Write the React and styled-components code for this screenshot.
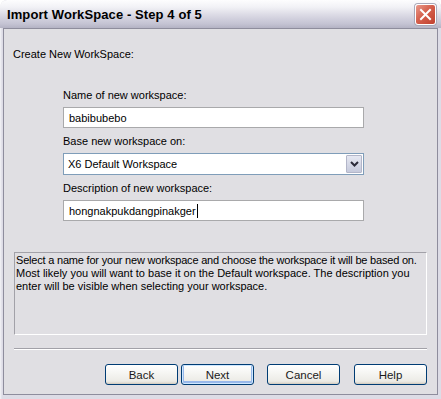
import React from "react";
import styled, { createGlobalStyle } from "styled-components";

const GlobalStyle = createGlobalStyle`
  html, body {
    margin: 0;
    padding: 0;
    background: #ffffff;
  }
  * {
    box-sizing: border-box;
  }
`;

const Frame = styled.div`
  width: 441px;
  height: 399px;
  display: flex;
  flex-direction: column;
  background: linear-gradient(to right, #f4f4f7, #dddce6 2px, #dddce6);
  border-radius: 7px 7px 0 0;
  font-family: "Liberation Sans", Arial, sans-serif;
  overflow: hidden;
`;

const TitleBar = styled.div`
  height: 28px;
  flex: none;
  display: flex;
  align-items: center;
  justify-content: space-between;
  padding: 1px 5px 0 7px;
  background: linear-gradient(
    to bottom,
    #fdfdfe 0%,
    #f2f2f6 25%,
    #dad9e4 55%,
    #c4c3d3 85%,
    #b4b3c4 100%
  );
  border-radius: 7px 7px 0 0;
`;

const Title = styled.span`
  font-size: 13px;
  font-weight: bold;
  color: #000;
  letter-spacing: 0.1px;
`;

const CloseButton = styled.div`
  width: 21px;
  height: 21px;
  border-radius: 3px;
  border: 1px solid #ffffff;
  box-shadow: 0 0 0 1px #a9a8b8;
  background: linear-gradient(135deg, #e99a8b 0%, #d5604d 45%, #c1402f 100%);
  display: flex;
  align-items: center;
  justify-content: center;
`;

const Body = styled.div`
  flex: 1;
  margin: 0 3px 4px 3px;
  background: #e0dfe3;
  border: 1px solid #8e8d9d;
  display: flex;
  flex-direction: column;
  font-size: 11px;
  color: #000;
`;

const Heading = styled.div`
  margin: 18px 0 0 9px;
  line-height: 14px;
`;

const Form = styled.div`
  margin: 27px 0 0 59px;
  width: 301px;
  display: flex;
  flex-direction: column;
`;

const Label = styled.div`
  line-height: 14px;
  margin: ${({ $first }) => ($first ? "0" : "6px")} 0 5px 0;
`;

const TextBox = styled.div`
  height: 21px;
  background: #fff;
  border: 1px solid #a9a9ab;
  padding: 0 0 0 5px;
  display: flex;
  align-items: center;
  line-height: 14px;
`;

const Caret = styled.span`
  display: inline-block;
  width: 1px;
  height: 14px;
  background: #000;
  margin-left: 1px;
`;

const SelectBox = styled.div`
  height: 22px;
  background: #fff;
  border: 1px solid #7f9db9;
  display: flex;
  align-items: stretch;
  line-height: 14px;
`;

const SelectValue = styled.div`
  flex: 1;
  display: flex;
  align-items: center;
  padding-left: 4px;
`;

const SelectArrow = styled.div`
  width: 16px;
  margin: 1px;
  border: 1px solid #b3b6c9;
  border-radius: 1px;
  background: linear-gradient(to bottom, #e6e8f2, #c6cadc);
  display: flex;
  align-items: center;
  justify-content: center;
`;

const InfoBox = styled.div`
  margin: 31px 10px 0 10px;
  height: 83px;
  border-top: 1px solid #a2a1a8;
  border-left: 1px solid #a2a1a8;
  border-right: 1px solid #ffffff;
  border-bottom: 1px solid #ffffff;
  padding: 1px 0 0 1px;
  line-height: 13px;
  white-space: nowrap;
  overflow: hidden;
`;

const InfoLine = styled.div`
  letter-spacing: ${({ $tight }) => ($tight ? "-0.2px" : "0")};
`;

const Separator = styled.div`
  margin: 13px 10px 0 10px;
  height: 2px;
  border-top: 1px solid #a2a1a8;
  border-bottom: 1px solid #ffffff;
`;

const ButtonRow = styled.div`
  margin: 14px 10px 0 0;
  display: flex;
  justify-content: flex-end;
`;

const Button = styled.div`
  width: 73px;
  height: 21px;
  margin-left: ${({ $gap }) => $gap}px;
  border: 1px solid #003c74;
  border-radius: 3px;
  background: linear-gradient(to bottom, #ffffff 0%, #f6f6f3 40%, #ecebe6 85%, #d6d0c5 100%);
  box-shadow: ${({ $default }) =>
    $default
      ? "inset 0 0 0 1px #cee7ff, inset 0 -1px 0 2px #98b8ea"
      : "inset 0 -1px 0 0 #d6d0c5"};
  display: flex;
  align-items: center;
  justify-content: center;
  font-size: 11.5px;
  color: #1a1a1a;
`;

export default function App() {
  return (
    <>
      <GlobalStyle />
      <Frame>
        <TitleBar>
          <Title>Import WorkSpace - Step 4 of 5</Title>
          <CloseButton>
            <svg width="13" height="13" viewBox="0 0 13 13">
              <path
                d="M2 2 L11 11 M11 2 L2 11"
                stroke="#ffffff"
                strokeWidth="2"
                strokeLinecap="square"
              />
            </svg>
          </CloseButton>
        </TitleBar>
        <Body>
          <Heading>Create New WorkSpace:</Heading>
          <Form>
            <Label $first>Name of new workspace:</Label>
            <TextBox>babibubebo</TextBox>
            <Label>Base new workspace on:</Label>
            <SelectBox>
              <SelectValue>X6 Default Workspace</SelectValue>
              <SelectArrow>
                <svg width="9" height="6" viewBox="0 0 9 6">
                  <path
                    d="M1 1 L4.5 4.5 L8 1"
                    stroke="#2b2b3a"
                    strokeWidth="2"
                    fill="none"
                  />
                </svg>
              </SelectArrow>
            </SelectBox>
            <Label>Description of new workspace:</Label>
            <TextBox>
              hongnakpukdangpinakger
              <Caret />
            </TextBox>
          </Form>
          <InfoBox>
            <InfoLine $tight>
              Select a name for your new workspace and choose the workspace it will be based on.
            </InfoLine>
            <InfoLine>
              Most likely you will want to base it on the Default workspace. The description you
            </InfoLine>
            <InfoLine>enter will be visible when selecting your workspace.</InfoLine>
          </InfoBox>
          <Separator />
          <ButtonRow>
            <Button $gap={0}>Back</Button>
            <Button $gap={3} $default>
              Next
            </Button>
            <Button $gap={13}>Cancel</Button>
            <Button $gap={14}>Help</Button>
          </ButtonRow>
        </Body>
      </Frame>
    </>
  );
}
